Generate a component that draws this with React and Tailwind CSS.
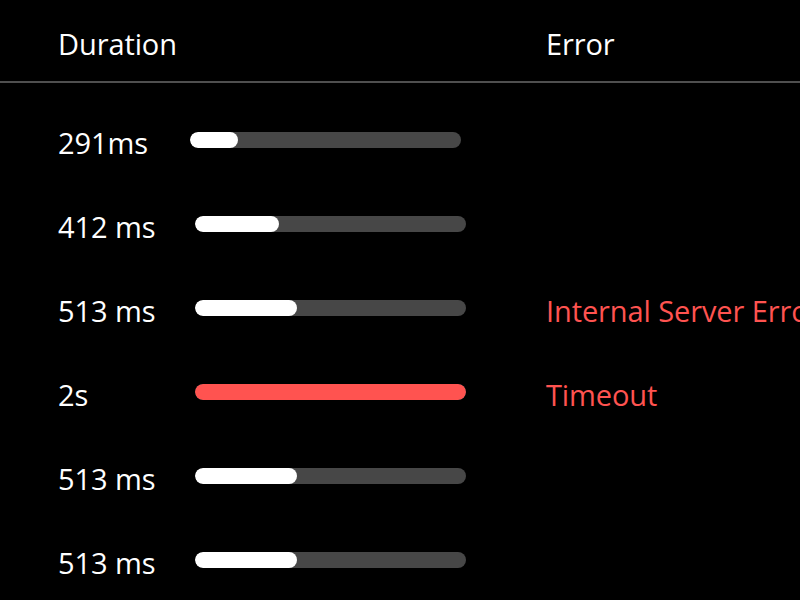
export default function App() {
  const rows = [
    { label: "291ms", lw: "w-[132px]", fill: 48, red: false, err: "" },
    { label: "412 ms", lw: "w-[137px]", fill: 84, red: false, err: "" },
    { label: "513 ms", lw: "w-[137px]", fill: 102, red: false, err: "Internal Server Error" },
    { label: "2s", lw: "w-[137px]", fill: 271, red: true, err: "Timeout" },
    { label: "513 ms", lw: "w-[137px]", fill: 102, red: false, err: "" },
    { label: "513 ms", lw: "w-[137px]", fill: 102, red: false, err: "" },
  ];
  return (
    <div className="w-[800px] h-[600px] bg-black overflow-hidden text-white" style={{ fontFamily: "'Open Sans', 'Noto Sans', sans-serif" }}>
      <div className="h-[83px] border-b-2 border-[#4f4f4f] flex items-center pl-[58px] pt-[6px] text-[29px] leading-none font-medium tracking-[-0.1px]">
        <div className="w-[488px] shrink-0">Duration</div>
        <div>Error</div>
      </div>
      <div className="pt-[17px] pl-[58px]">
        {rows.map((r, i) => (
          <div key={i} className="h-[84px] flex items-center text-[29px] leading-none font-medium tracking-[-0.1px]">
            <div className="w-[488px] shrink-0 flex items-center">
              <div className={`${r.lw} shrink-0`}>{r.label}</div>
              <div className="w-[271px] shrink-0 h-[16px] mb-[5px] rounded-full bg-[#474747] overflow-hidden">
                <div className={`h-full rounded-full ${r.red ? "bg-[#ff5350]" : "bg-white"}`} style={{ width: r.fill }} />
              </div>
            </div>
            <div className="text-[#ff5350] whitespace-nowrap">{r.err}</div>
          </div>
        ))}
      </div>
    </div>
  );
}
